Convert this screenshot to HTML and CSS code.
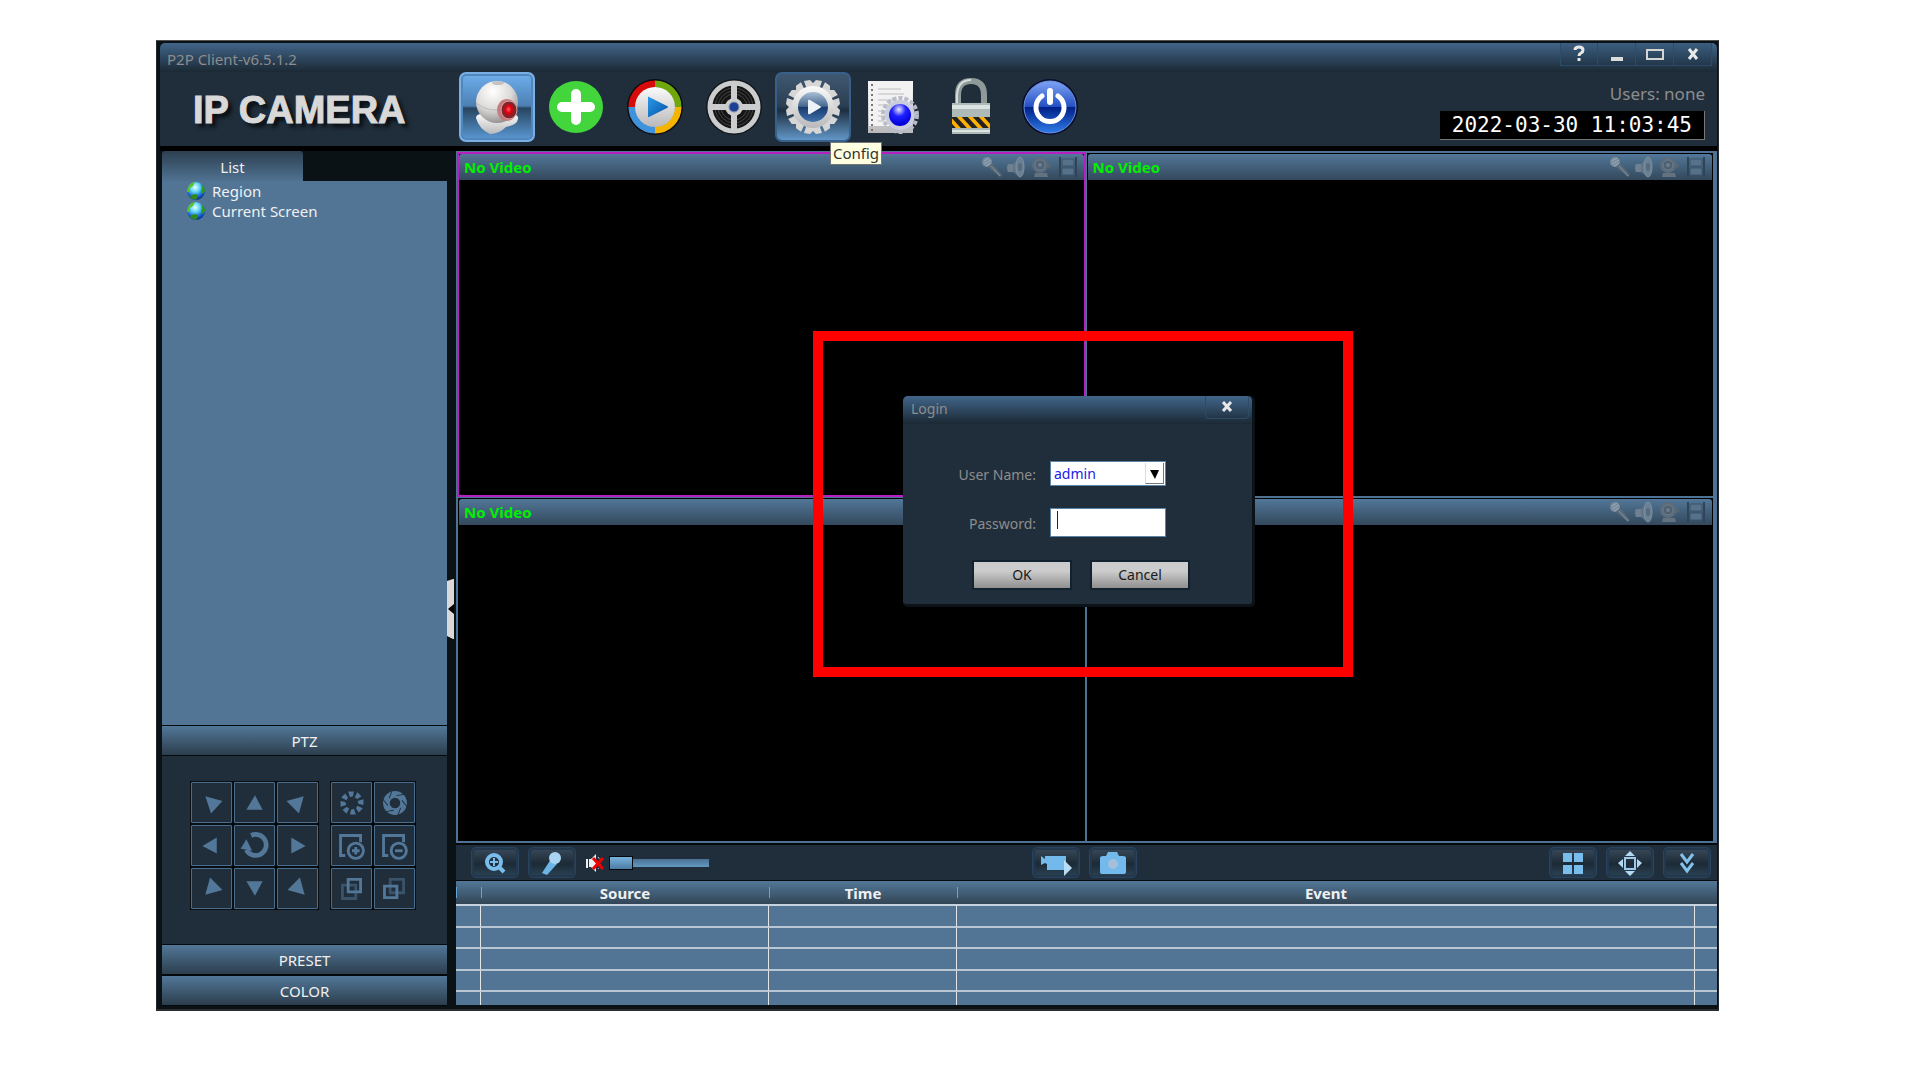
FILE: index.html
```
<!DOCTYPE html>
<html lang="en">
<head>
	<meta charset="utf-8">
	<title>P2P Client</title>
	<link rel="stylesheet" href="styles.css">
</head>
<body>
	<svg class="sprite" aria-hidden="true">
		<defs>
			<linearGradient id="silver" x1="0" y1="0" x2="0" y2="1"><stop offset="0" stop-color="#fafafa"/><stop offset="1" stop-color="#b9b9bb"/></linearGradient>
			<linearGradient id="blueArrow" x1="0" y1="0" x2="1" y2="1"><stop offset="0" stop-color="#2a9be8"/><stop offset="1" stop-color="#0550a8"/></linearGradient>
			<linearGradient id="navy" x1="0" y1="0" x2="0" y2="1"><stop offset="0" stop-color="#7fa4f5"/><stop offset=".49" stop-color="#2451c4"/><stop offset=".5" stop-color="#001f86"/><stop offset="1" stop-color="#2f7be8"/></linearGradient>
			<linearGradient id="lens" x1="0" y1="0" x2="0" y2="1"><stop offset="0" stop-color="#a9bfd6"/><stop offset=".48" stop-color="#45678f"/><stop offset=".5" stop-color="#17396b"/><stop offset="1" stop-color="#4272ad"/></linearGradient>
			<radialGradient id="ball" cx=".4" cy=".25" r=".8"><stop offset="0" stop-color="#fff"/><stop offset=".55" stop-color="#dcdad8"/><stop offset="1" stop-color="#8c8988"/></radialGradient>
			<radialGradient id="redEye" cx=".45" cy=".45" r=".6"><stop offset="0" stop-color="#ff5a60"/><stop offset=".5" stop-color="#e3000f"/><stop offset="1" stop-color="#8d1d22"/></radialGradient>
			<radialGradient id="blueBall" cx=".45" cy=".25" r=".7"><stop offset="0" stop-color="#e8e8ff"/><stop offset=".45" stop-color="#2020ff"/><stop offset="1" stop-color="#0000d8"/></radialGradient>
			<radialGradient id="sea" cx=".45" cy=".3" r=".75"><stop offset="0" stop-color="#eaffff"/><stop offset=".35" stop-color="#5fd4f6"/><stop offset=".7" stop-color="#1560d0"/><stop offset="1" stop-color="#021c80"/></radialGradient>
			<pattern id="hazard" width="11" height="12" patternUnits="userSpaceOnUse"><rect width="11" height="12" fill="#ffb000"/><path d="M-6 0h6l11 12h-6zM5 0h6l11 12h-6z" fill="#222"/></pattern>
		</defs>
		<symbol id="globe" viewBox="0 0 20 20">
			<circle cx="10" cy="10" r="9" fill="url(#sea)"/>
			<path d="M2 7Q4 2 9 1L7 5 4 7 3 11H1Q1 9 2 7z" fill="#5bc41e"/>
			<path d="M15 3q4 3 4 7l-2 3-2-2 1-4z" fill="#2f9a22"/>
			<path d="M5 14l5-1 2 2-2 4Q6 18 4 16z" fill="#2f8a18"/>
		</symbol>
		<symbol id="mic-pane" viewBox="0 0 22 22">
			<circle cx="6" cy="6" r="5" fill="#788b9c"/><path d="M3 5l5-3M3 8l7-4M5 10l5-3" stroke="#9aabb9" fill="none"/><path d="M7 11l4-4 10 12-2 2z" fill="#596a79"/><path d="M10 10l9 10" stroke="#8291a0"/>
		</symbol>
		<symbol id="speaker-pane" viewBox="0 0 22 22">
			<path d="M2 8h5v8H2Q0 12 2 8z" fill="#6e8091"/><path d="M7 8l7-7v20l-7-5z" fill="#607588"/><ellipse cx="14" cy="11" rx="4" ry="10" fill="#6a8093" stroke="#7d90a1"/><ellipse cx="14" cy="11" rx="2" ry="4" fill="#566b7d"/>
		</symbol>
		<symbol id="dome-pane" viewBox="0 0 22 22">
			<circle cx="9" cy="9" r="8" fill="#5b6c7c"/><circle cx="9" cy="9" r="5" fill="#4e6071" stroke="#6c7e8e"/><circle cx="9" cy="9" r="2" fill="#6c7e8e"/><path d="M4 17h12l1 4H3z" fill="#62727f"/><path d="M17 6l4 4-4 3z" fill="#566675"/>
		</symbol>
		<symbol id="film-pane" viewBox="0 0 22 22">
			<path d="M4 1v20M20 1v20" stroke="#2f4457" stroke-width="2" fill="none"/><path d="M6 3h12v7H6zM6 12h12v7H6z" fill="#56728b" stroke="#3b536a"/>
		</symbol>
	</svg>

	<div class="app">
		<div class="titlebar">
			<span class="title">P2P Client-v6.5.1.2</span>
			<div class="winbuttons">
				<button type="button" aria-label="Help"><svg width="14" height="18" viewBox="0 0 14 18"><path d="M3 5q0-3 4-3t4 3q0 2-2 3t-2 3M7 13v3" fill="none" stroke="#e8e8e8" stroke-width="3"/></svg></button>
				<button type="button" aria-label="Minimize"><svg width="14" height="18" viewBox="0 0 14 18"><path d="M1 12h12v4H1z" fill="#dcdcdc"/></svg></button>
				<button type="button" aria-label="Maximize"><svg width="18" height="18" viewBox="0 0 18 18"><path d="M1 5h16v9H1z" fill="none" stroke="#d5d5d5" stroke-width="2"/></svg></button>
				<button type="button" aria-label="Close"><svg width="14" height="18" viewBox="0 0 14 18"><path d="M3 4l8 10M11 4L3 14" stroke="#e8e8e8" stroke-width="3"/></svg></button>
			</div>
		</div>

		<div class="header">
			<div class="logo">IP CAMERA</div>
			<div class="tools">
				<button type="button" class="tool active" aria-label="Live view">
					<svg width="56" height="58" viewBox="0 0 56 58">
						<path d="M7 40q0-4 6-4h28q9 0 8 5-1 6-12 8-7 7-16 7Q10 51 7 40z" fill="url(#silver)"/>
						<circle cx="28" cy="24" r="21" fill="url(#ball)"/>
						<path d="M7 25q14 11 30 5" fill="none" stroke="#bdb9b7"/>
						<ellipse cx="29" cy="5" rx="6" ry="2" fill="#c4c2c0"/>
						<ellipse cx="38" cy="32" rx="10" ry="11" fill="#c47c7e"/>
						<ellipse cx="40" cy="32" rx="8" ry="9" fill="#7e262b" stroke="#dba0a0"/>
						<ellipse cx="40" cy="32" rx="5" ry="6" fill="url(#redEye)"/>
					</svg>
				</button>
				<button type="button" class="tool" aria-label="Add device">
					<svg width="56" height="58" viewBox="0 0 56 58"><ellipse cx="28" cy="29" rx="27" ry="26" fill="#43d63c"/><path d="M28 16v26M14 29h28" stroke="#fff" stroke-width="10" stroke-linecap="round"/></svg>
				</button>
				<button type="button" class="tool" aria-label="Playback">
					<svg width="56" height="58" viewBox="0 0 56 58">
						<circle cx="28" cy="29" r="28" fill="#0c0d10"/>
						<g fill="none" stroke-width="7"><path d="M5 29A23 23 0 0 1 28 6" stroke="#d90a0a"/><path d="M28 6a23 23 0 0 1 23 23" stroke="#6fa80c"/><path d="M51 29a23 23 0 0 1-23 23" stroke="#f5b400"/><path d="M28 52A23 23 0 0 1 5 29" stroke="#3f93dc"/></g>
						<circle cx="28" cy="29" r="20" fill="url(#silver)"/>
						<path d="M21 19q0-1 1 0l18 9q2 1 0 2l-18 9q-1 1-1-1z" fill="url(#blueArrow)"/>
					</svg>
				</button>
				<button type="button" class="tool" aria-label="Record">
					<svg width="56" height="58" viewBox="0 0 56 58">
						<circle cx="28" cy="29" r="28" fill="#15181b"/>
						<circle cx="28" cy="29" r="24" fill="#151515" stroke="#cbccce" stroke-width="5"/>
						<g fill="none" stroke="#444"><circle cx="28" cy="29" r="13"/><circle cx="28" cy="29" r="16"/><circle cx="28" cy="29" r="19"/></g>
						<path d="M28 5v48M4 29h48" stroke="#cbccce" stroke-width="6"/>
						<circle cx="28" cy="29" r="9" fill="#cbccce"/><circle cx="28" cy="29" r="5" fill="#1e3f96" stroke="#8a93a8"/>
					</svg>
				</button>
				<button type="button" class="tool hover" aria-label="Config" aria-describedby="tip">
					<svg width="56" height="58" viewBox="0 0 56 58">
						<g fill="#d6d6d6">
							<g id="teeth"><path d="M22 12l-3-9 6-1 3 3 3-3 6 1-3 9z"/><path d="M22 46l-3 9 6 1 3-3 3 3 6-1-3-9z"/></g>
							<use href="#teeth" transform="rotate(45 28 29)"/><use href="#teeth" transform="rotate(90 28 29)"/><use href="#teeth" transform="rotate(135 28 29)"/>
						</g>
						<circle cx="28" cy="29" r="21" fill="url(#silver)"/>
						<circle cx="28" cy="29" r="15" fill="url(#lens)"/>
						<path d="M23 23q0-2 2-1l10 6q2 1 0 2l-10 6q-2 1-2-1z" fill="#eef2f6"/>
					</svg>
				</button>
				<button type="button" class="tool" aria-label="Log">
					<svg width="56" height="58" viewBox="0 0 56 58">
						<path d="M4 3h45v52H4z" fill="url(#silver)"/><path d="M5 3h43v45H5z" fill="#f2f2f2"/>
						<path d="M8 6v48" stroke="#777" stroke-width="2" stroke-dasharray="2 3"/>
						<path d="M14 11h23M14 16h26M14 22h18M14 27h12M14 33h8M14 38h9M14 43h7" stroke="#bcbcbc" stroke-width="1"/>
						<circle cx="36" cy="37" r="17" fill="none" stroke="#b9bdca" stroke-width="4" stroke-dasharray="4 2"/>
						<circle cx="36" cy="37" r="15" fill="#c9cddd"/>
						<circle cx="36" cy="37" r="11" fill="url(#blueBall)"/>
					</svg>
				</button>
				<button type="button" class="tool" aria-label="Lock">
					<svg width="56" height="58" viewBox="0 0 56 58">
						<path d="M15 27V17q0-14 13-14t13 14v10" fill="none" stroke="#8e9a98" stroke-width="6"/>
						<path d="M14 27V17Q15 2 28 2" fill="none" stroke="#d5dedb" stroke-width="2"/>
						<path d="M9 25h38v31H9z" fill="#aebab7"/><path d="M9 27h38v4H9zM9 52h38v2H9z" fill="#dbe4e1"/>
						<path d="M9 39h38v11H9z" fill="url(#hazard)"/>
					</svg>
				</button>
				<button type="button" class="tool" aria-label="Exit">
					<svg width="56" height="58" viewBox="0 0 56 58">
						<circle cx="28" cy="29" r="28" fill="#060d2c"/><circle cx="28" cy="29" r="26" fill="url(#navy)" stroke="#6d8fde"/>
						<path d="M20 18a14 14 0 1 0 16 0" fill="none" stroke="#fff" stroke-width="5" stroke-linecap="round"/><path d="M28 13v11" stroke="#fff" stroke-width="6" stroke-linecap="round"/>
					</svg>
				</button>
			</div>
			<div class="status">
				<div class="users">Users: none</div>
				<div class="clock">2022-03-30 11:03:45</div>
			</div>
		</div>

		<div class="content">
			<div class="side">
				<div class="tabs"><button type="button" class="tab">List</button></div>
				<ul class="tree">
					<li><svg width="20" height="20"><use href="#globe"/></svg>Region</li>
					<li><svg width="20" height="20"><use href="#globe"/></svg>Current Screen</li>
				</ul>
				<button type="button" class="bar">PTZ</button>
				<div class="ptz">
					<div class="pad move">
						<button type="button" aria-label="Up left"><svg viewBox="0 0 43 43"><path d="M15 15l18 5-12 13z"/></svg></button>
						<button type="button" aria-label="Up"><svg viewBox="0 0 43 43"><path d="M13 29l9-15 8 15z"/></svg></button>
						<button type="button" aria-label="Up right"><svg viewBox="0 0 43 43"><path d="M28 15l-5 18-13-13z"/></svg></button>
						<button type="button" aria-label="Left"><svg viewBox="0 0 43 43"><path d="M27 13v17l-15-8z"/></svg></button>
						<button type="button" aria-label="Auto"><svg viewBox="0 0 43 43"><path class="line thick" d="M18 11a11 11 0 1 1-5 15"/><path d="M7 25l6-10 6 12z"/></svg></button>
						<button type="button" aria-label="Right"><svg viewBox="0 0 43 43"><path d="M15 13v17l15-8z"/></svg></button>
						<button type="button" aria-label="Down left"><svg viewBox="0 0 43 43"><path d="M20 10l13 13-18 5z"/></svg></button>
						<button type="button" aria-label="Down"><svg viewBox="0 0 43 43"><path d="M13 14h17l-8 15z"/></svg></button>
						<button type="button" aria-label="Down right"><svg viewBox="0 0 43 43"><path d="M24 10l5 18-18-5z"/></svg></button>
					</div>
					<div class="pad lens">
						<button type="button" aria-label="Iris open"><svg viewBox="0 0 43 43"><g id="blade"><path d="M18 10l6 0-1 5-3 1z"/><path d="M26 34l-6 0 1-5 3-1z"/></g><use href="#blade" transform="rotate(45 22 22)"/><use href="#blade" transform="rotate(90 22 22)"/><use href="#blade" transform="rotate(135 22 22)"/></svg></button>
						<button type="button" aria-label="Iris close"><svg viewBox="0 0 43 43"><circle class="line ring" cx="22" cy="22" r="9"/><g class="cut"><path id="slit" d="M19 9l-3 8M25 35l3-8"/><use href="#slit" transform="rotate(60 22 22)"/><use href="#slit" transform="rotate(120 22 22)"/></g></svg></button>
						<button type="button" aria-label="Zoom in"><svg viewBox="0 0 43 43"><path class="line" d="M15 32h-5V11h21v7"/><circle class="line" cx="26" cy="27" r="8"/><path class="line" d="M26 23v8M22 27h8"/></svg></button>
						<button type="button" aria-label="Zoom out"><svg viewBox="0 0 43 43"><path class="line" d="M15 32h-5V11h21v7"/><circle class="line" cx="26" cy="27" r="8"/><path class="line" d="M22 27h8"/></svg></button>
						<button type="button" aria-label="Focus near"><svg viewBox="0 0 43 43"><path class="line dim" d="M12 18h14v14H12z"/><path class="line" d="M18 12h13v13H18z"/></svg></button>
						<button type="button" aria-label="Focus far"><svg viewBox="0 0 43 43"><path class="line dim" d="M17 12h14v14H17z"/><path class="line" d="M11 19h13v12H11z"/></svg></button>
					</div>
				</div>
				<button type="button" class="bar">PRESET</button>
				<button type="button" class="bar last">COLOR</button>
			</div>

			<button type="button" class="handle" aria-label="Hide side panel"><svg width="8" height="62" viewBox="0 0 8 62"><path d="M0 3l6-2 1 0v60l-1 0-6-3z" fill="#d9d9d9"/><path d="M7 26v10l-6-5z" fill="#000"/></svg></button>

			<div class="main">
				<div class="grid">
					<div class="pane active">
						<div class="panehead"><span>No Video</span><div class="paneicons"><svg><use href="#mic-pane"/></svg><svg><use href="#speaker-pane"/></svg><svg><use href="#dome-pane"/></svg><svg><use href="#film-pane"/></svg></div></div>
					</div>
					<div class="pane">
						<div class="panehead"><span>No Video</span><div class="paneicons"><svg><use href="#mic-pane"/></svg><svg><use href="#speaker-pane"/></svg><svg><use href="#dome-pane"/></svg><svg><use href="#film-pane"/></svg></div></div>
					</div>
					<div class="pane">
						<div class="panehead"><span>No Video</span></div>
					</div>
					<div class="pane">
						<div class="panehead"><span></span><div class="paneicons"><svg><use href="#mic-pane"/></svg><svg><use href="#speaker-pane"/></svg><svg><use href="#dome-pane"/></svg><svg><use href="#film-pane"/></svg></div></div>
					</div>
				</div>

				<div class="toolbar">
					<div class="group audio">
						<button type="button" class="key" aria-label="Zoom"><svg width="34" height="26" viewBox="0 0 34 26"><circle cx="16" cy="12" r="7" fill="none" stroke="#79bdec" stroke-width="4"/><path d="M16 8v8M12 12h8" stroke="#79bdec" stroke-width="2"/><path d="M21 17l5 5" stroke="#79bdec" stroke-width="4"/></svg></button>
						<button type="button" class="key" aria-label="Talk"><svg width="34" height="26" viewBox="0 0 34 26"><path d="M16 9l6 5-10 11-5-2z" fill="#6db4e6"/><circle cx="20" cy="8" r="6" fill="#a9d4f2"/></svg></button>
						<svg width="20" height="20" viewBox="0 0 20 20"><path d="M1 6h2v9H1zM4 6h2l5-5v18l-5-5H4z" fill="#eee"/><path d="M13 4q5 6 0 12" fill="none" stroke="#ddd" stroke-dasharray="2 2"/><path d="M8 5l10 11M18 5L8 16" stroke="#f00000" stroke-width="3"/></svg>
						<input type="range" class="volume" min="0" max="100" value="0" aria-label="Volume">
					</div>
					<div class="group capture">
						<button type="button" class="key" aria-label="Record all"><svg width="34" height="26" viewBox="0 0 34 26"><path d="M2 6l4 3V6h21v14H8v-6l-2-1-4 2z" fill="#73b9ec"/><path d="M25 10l8 8-8 8z" fill="#b9dcf5"/></svg></button>
						<button type="button" class="key" aria-label="Snapshot"><svg width="34" height="26" viewBox="0 0 34 26"><path d="M4 8q0-2 3-2h3l2-4h9l2 4h4q3 0 3 2v14q0 2-3 2H7q-3 0-3-2z" fill="#73b9ec"/><circle cx="17" cy="14" r="5" fill="#a3bfd9"/></svg></button>
					</div>
					<div class="group views">
						<button type="button" class="key" aria-label="Layout"><svg width="34" height="26" viewBox="0 0 34 26"><path d="M7 3h9v9H7zM18 3h9v9h-9zM7 15h9v9H7zM18 15h9v9h-9z" fill="#79bdec"/></svg></button>
						<button type="button" class="key" aria-label="Full screen"><svg width="34" height="26" viewBox="0 0 34 26"><path d="M12 8h10v11H12z" fill="none" stroke="#9cc9ea" stroke-width="2"/><path d="M12 6l5-5 5 5zM12 21l5 5 5-5zM10 9v9l-5-5zM24 9v9l5-5z" fill="#b5d9f2"/></svg></button>
						<button type="button" class="key" aria-label="Collapse"><svg width="34" height="26" viewBox="0 0 34 26"><path d="M11 4l6 8 6-8M11 13l6 8 6-8" fill="none" stroke="#83c0ea" stroke-width="3"/></svg></button>
					</div>
				</div>

				<div class="events">
					<table>
						<colgroup><col class="c-mark"><col class="c-source"><col class="c-time"><col><col class="c-end"></colgroup>
						<thead><tr><th></th><th>Source</th><th>Time</th><th>Event</th><th class="end"></th></tr></thead>
						<tbody>
							<tr><td></td><td></td><td></td><td></td><td></td></tr>
							<tr><td></td><td></td><td></td><td></td><td></td></tr>
							<tr><td></td><td></td><td></td><td></td><td></td></tr>
							<tr><td></td><td></td><td></td><td></td><td></td></tr>
							<tr><td></td><td></td><td></td><td></td><td></td></tr>
						</tbody>
					</table>
				</div>
			</div>
		</div>

		<div class="tooltip" id="tip" role="tooltip">Config</div>

		<form class="dialog">
			<div class="dialoghead">
				<span>Login</span>
				<button type="button" aria-label="Close login"><svg width="14" height="18" viewBox="0 0 14 18"><path d="M3 4l8 9M11 4l-8 9" stroke="#e8e8e8" stroke-width="3"/></svg></button>
			</div>
			<div class="fields">
				<label for="user">User Name:</label>
				<div class="combo">
					<select id="user"><option>admin</option></select>
					<span class="arrow"><svg width="10" height="10" viewBox="0 0 10 10"><path d="M0 0h9l-4 9z" fill="#000"/></svg></span>
				</div>
				<label for="pass">Password:</label>
				<input type="password" id="pass">
			</div>
			<div class="actions">
				<button type="button">OK</button>
				<button type="button">Cancel</button>
			</div>
		</form>

		<div class="marker"></div>
	</div>
</body>
</html>
```
FILE: styles.css
```
* {
	box-sizing: border-box;
}
body {
	margin: 0;
	background: #fff;
	font-family: Tahoma, "Noto Sans", sans-serif;
	font-size: 15px;
	line-height: 20px;
	color: #f0f0f0;
}
button, input, select {
	font: inherit;
	color: inherit;
	margin: 0;
	padding: 0;
	border: none;
	background: none;
}
svg {
	display: block;
}
.sprite {
	position: absolute;
	width: 0;
	height: 0;
}
.app {
	position: relative;
	display: flex;
	flex-direction: column;
	height: calc(100vh - 109px);
	margin: 40px 201px 0 156px;
	padding: 2px 1px 4px 3px;
	background: #0b1216;
	border: 1px solid #24282c;
	border-top-color: #505050;
	border-bottom: 2px solid #2b2e31;
}

/* title bar */
.titlebar {
	display: flex;
	justify-content: space-between;
	height: 29px;
	padding: 0 5px 0 7px;
	background: linear-gradient(#41658a, #1b2934);
	border-radius: 5px 5px 0 0;
}
.title {
	color: #8d8d8d;
	line-height: 32px;
}
.winbuttons {
	display: flex;
	height: 23px;
}
.winbuttons button {
	display: flex;
	justify-content: center;
	align-items: center;
	width: 38px;
	border: 1px solid #2c4c68;
	border-top: none;
	border-left: none;
	background: linear-gradient(#3c5e80, #22374a);
}
.winbuttons button:first-child {
	border-left: 1px solid #2c4c68;
}

/* header */
.header {
	display: flex;
	height: 74px;
	background: #202e3b;
}
.logo {
	width: 299px;
	padding-left: 33px;
	font-family: Impact, "Liberation Sans", sans-serif;
	font-weight: bold;
	font-size: 38px;
	line-height: 76px;
	white-space: nowrap;
	color: #d8d8d8;
	-webkit-text-stroke: 1px #d8d8d8;
	text-shadow: 4px 4px 4px #070b0f;
}
.tools {
	display: flex;
	gap: 3px;
}
.tool {
	display: flex;
	align-items: center;
	justify-content: center;
	width: 76px;
	height: 70px;
	border: 2px solid transparent;
	border-radius: 7px;
}
.tool.active {
	background: linear-gradient(#6eaeec, #4c80b4 48%, #274560 52%, #5b9ad6);
	border-color: #78b0e6;
	box-shadow: inset 0 0 0 2px #5387bb;
}
.tool.hover {
	background: linear-gradient(#3f5871, #2b3f53 48%, #1d2f40 55%, #6297c8);
	border-color: #37618a;
}
.status {
	flex: 1;
	display: flex;
	flex-direction: column;
	align-items: flex-end;
	padding: 12px 12px 0 0;
}
.users {
	color: #8d8d8d;
	font-size: 17px;
}
.clock {
	margin-top: 7px;
	padding: 0 12px 0 12px;
	background: #000;
	border-right: 1px solid #777;
	border-bottom: 1px solid #777;
	font-family: "DejaVu Sans Mono", monospace;
	font-size: 21px;
	line-height: 28px;
	white-space: pre;
	color: #fff;
}

/* body area */
.content {
	flex: 1;
	display: flex;
	min-height: 0;
	padding-left: 2px;
	border-top: 5px solid #000;
}
.side {
	display: flex;
	flex-direction: column;
	width: 285px;
}
.tab {
	display: block;
	width: 141px;
	height: 30px;
	background: linear-gradient(#2c3f50, #507292);
	border-radius: 3px 3px 0 0;
	line-height: 32px;
}
.tree {
	flex: 1;
	margin: 0;
	padding: 0 0 0 24px;
	list-style: none;
	background: #527596;
}
.tree li {
	display: flex;
	gap: 6px;
	line-height: 21px;
	height: 20px;
}
.bar {
	height: 31px;
	border-top: 1px solid #05090c;
	border-bottom: 1px solid #05090c;
	background: linear-gradient(#527798, #2c3e4d);
}
.bar.last {
	margin-bottom: -1px;
}
.ptz {
	display: flex;
	align-items: flex-start;
	gap: 11px;
	height: 188px;
	padding: 25px 0 0 28px;
	background: #202e3b;
}
.pad {
	display: grid;
	grid-template-columns: repeat(3, 43px);
	grid-auto-rows: 43px;
	background: #000;
}
.pad.lens {
	grid-template-columns: repeat(2, 43px);
}
.pad button {
	background: #202e3b;
	border: 1px solid #0a0f14;
	box-shadow: inset 0 0 0 1px #486d8e;
	border-radius: 2px;
}
.pad svg {
	width: 41px;
	height: 41px;
	fill: #527798;
}
.pad .line {
	fill: none;
	stroke: #527798;
	stroke-width: 3;
}
.pad .thick {
	stroke-width: 5;
}
.pad .ring {
	stroke-width: 7;
}
.pad .dim {
	opacity: .5;
}
.cut {
	stroke: #202e3b;
	stroke-width: 1;
}
.handle {
	align-self: flex-start;
	width: 9px;
	margin-top: 427px;
}

/* video panes */
.main {
	flex: 1;
	min-width: 0;
	display: flex;
	flex-direction: column;
}
.grid {
	flex: 1;
	display: grid;
	grid-template-columns: 1fr 1fr;
	grid-template-rows: 1fr 1fr;
	padding: 1px 3px 1px 1px;
	background: #4d7293;
}
.pane {
	padding: 1px;
	background: #000;
	border: 1px solid #4d7293;
}
.pane.active {
	padding: 0;
	border: 2px solid #b81fc0;
}
.panehead {
	display: flex;
	justify-content: space-between;
	align-items: center;
	height: 26px;
	padding: 0 6px 0 5px;
	background: linear-gradient(#527798, #33485c);
	border-radius: 3px 3px 0 0;
	color: #00f000;
	font-weight: bold;
}
.paneicons {
	display: flex;
	gap: 3px;
}
.paneicons svg {
	width: 22px;
	height: 22px;
}

/* control strip */
.toolbar {
	display: flex;
	justify-content: space-between;
	align-items: center;
	height: 38px;
	padding: 0 6px 0 15px;
	background: #202e3b;
	border-top: 2px solid #05090c;
	border-bottom: 1px solid #05090c;
}
.group {
	display: flex;
	align-items: center;
	gap: 9px;
}
.audio, .views {
	flex: 1;
}
.capture {
	padding-right: 14px;
}
.views {
	justify-content: flex-end;
}
.key {
	display: flex;
	align-items: center;
	justify-content: center;
	width: 48px;
	height: 31px;
	border: 1px solid #28445f;
	border-radius: 5px;
	background: linear-gradient(#3a4a5b, #1c2a36 55%, #2b4457);
	box-shadow: inset 0 0 0 2px #23384c;
}
.volume {
	appearance: none;
	width: 100px;
	height: 14px;
	margin-left: -5px;
}
.volume::-webkit-slider-runnable-track {
	height: 8px;
	background: linear-gradient(#4a7192, #6299c0);
}
.volume::-webkit-slider-thumb {
	appearance: none;
	width: 24px;
	height: 14px;
	margin-top: -3px;
	border: 1px solid #05090c;
	background: linear-gradient(#78b2de, #4c7ca4);
}

/* event list */
.events {
	height: 124px;
	overflow: hidden;
	background: #527596;
}
.events table {
	width: 100%;
	table-layout: fixed;
	border-collapse: separate;
	border-spacing: 0;
}
.c-mark { width: 25px; }
.c-source { width: 288px; }
.c-time { width: 188px; }
.c-end { width: 22px; }
.events thead {
	background: linear-gradient(#527798, #2f4150);
}
.events th {
	height: 25px;
	padding: 0;
	border-bottom: 2px solid #c6d2de;
	background: linear-gradient(#63a5d6, #63a5d6) no-repeat 0 6px / 1px 11px;
}
.events th.end {
	background: none;
}
.events td {
	height: 21px;
	padding: 0;
	border-right: 1px solid #e4e4e6;
	border-bottom: 2px solid #b9c6d3;
}
.events tr:nth-child(odd) td {
	height: 22px;
}
.events td:last-child {
	border-right: none;
}

/* floating parts */
.tooltip {
	position: absolute;
	left: 673px;
	top: 101px;
	padding: 0 2px;
	border: 1px solid #767676;
	background: #ffffe1;
	color: #333;
	line-height: 21px;
}
.dialog {
	position: absolute;
	left: 746px;
	top: 355px;
	width: 352px;
	padding-bottom: 14px;
	background: #202e3b;
	border-right: 3px solid #0b1318;
	border-bottom: 3px solid #0b1318;
	border-radius: 5px;
	color: #8d8d8d;
	font-size: 14px;
}
.dialoghead {
	display: flex;
	justify-content: space-between;
	height: 28px;
	padding: 0 3px 0 8px;
	background: linear-gradient(#41658a, #1b2934);
	border-radius: 5px 5px 0 0;
	line-height: 26px;
}
.dialoghead button {
	display: flex;
	justify-content: center;
	align-items: center;
	width: 44px;
	height: 23px;
	border: 1px solid #2c4c68;
	border-top: none;
	border-radius: 0 0 4px 4px;
}
.fields {
	display: grid;
	grid-template-columns: 133px 116px;
	grid-template-rows: 25px 29px;
	gap: 22px 14px;
	align-items: center;
	padding-top: 37px;
}
.fields label {
	text-align: right;
	padding-top: 3px;
}
.combo {
	display: flex;
	height: 25px;
	padding: 1px;
	background: #fff;
	border: 1px solid #5c84a6;
}
.combo select {
	appearance: none;
	flex: 1;
	padding-left: 2px;
	color: #2020e8;
	line-height: 20px;
}
.combo .arrow {
	display: flex;
	align-items: center;
	justify-content: center;
	width: 19px;
	padding-top: 3px;
	border-right: 1px solid #777;
	border-bottom: 1px solid #777;
	border-left: 1px solid #ddd;
}
.fields input {
	height: 29px;
	padding: 0 6px;
	border: 1px solid #5c84a6;
	background: linear-gradient(#222, #222) no-repeat 6px 2px / 1px 18px #fff;
	color: #222;
}
.actions {
	display: flex;
	justify-content: center;
	gap: 18px;
	padding: 23px 0 0 7px;
}
.actions button {
	width: 100px;
	height: 30px;
	border: 2px solid #13222f;
	background: linear-gradient(#ccc 35%, #8f8f8f);
	color: #1a1a1a;
}
.marker {
	position: absolute;
	left: 656px;
	top: 290px;
	width: 540px;
	height: 346px;
	border: 10px solid #f00;
	pointer-events: none;
}
```
